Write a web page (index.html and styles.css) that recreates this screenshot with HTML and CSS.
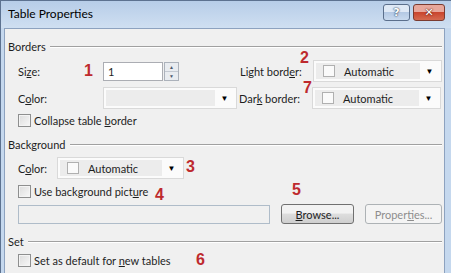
FILE: index.html
```html
<!doctype html>
<html lang="en">
<head>
    <meta charset="UTF-8">
    <title>Table Properties</title>
    <link rel="stylesheet" href="styles.css">
</head>
<body>
<div class="window">
    <div class="titlebar">
        <span class="title">Table Properties</span>
        <span class="tb-btn help">?</span>
        <span class="tb-btn close">&#10005;</span>
    </div>
    <div class="client">
        <div class="group-head"><span>Borders</span><i></i></div>
        <div class="borders">
            <div class="row">
                <label class="lbl">Si<u>z</u>e:</label>
                <div class="spin">
                    <span class="field">1</span>
                    <span class="spin-btns"><b>&#9650;</b><b>&#9660;</b></span>
                </div>
                <label class="lbl rlbl">Light bord<u>e</u>r:</label>
                <div class="combo wide"><span class="pick"><s></s>Automatic</span><em>&#9660;</em></div>
            </div>
            <div class="row">
                <label class="lbl">C<u>o</u>lor:</label>
                <div class="combo mid"><span class="pick"></span><em>&#9660;</em></div>
                <label class="lbl rlbl2">Dar<u>k</u> border:</label>
                <div class="combo wide"><span class="pick"><s></s>Automatic</span><em>&#9660;</em></div>
            </div>
            <div class="check"><span class="box"></span><span>Collapse table <u>b</u>order</span></div>
        </div>

        <div class="group-head"><span>Background</span><i></i></div>
        <div class="bg">
            <div class="row">
                <label class="lbl short">C<u>o</u>lor:</label>
                <div class="combo small"><span class="pick"><s></s>Automatic</span><em>&#9660;</em></div>
            </div>
            <div class="check"><span class="box"></span><span>Use background pict<u>u</u>re</span></div>
            <div class="row pic">
                <span class="path"></span>
                <span class="btn"><span><u>B</u>rowse...</span></span>
                <span class="btn off"><span>Proper<u>t</u>ies...</span></span>
            </div>
        </div>

        <div class="group-head"><span>Set</span><i></i></div>
        <div class="check last"><span class="box"></span><span>Set as default for <u>n</u>ew tables</span></div>

        <span class="num n1">1</span>
        <span class="num n2">2</span>
        <span class="num n7">7</span>
        <span class="num n3">3</span>
        <span class="num n4">4</span>
        <span class="num n5">5</span>
        <span class="num n6">6</span>
    </div>
</div>
</body>
</html>
```

FILE: styles.css
```css
* {
    margin: 0;
    padding: 0;
    box-sizing: border-box;
}

body {
    margin: 0;
    background: #6b82a3;
    font-family: "Lato", "Liberation Sans", sans-serif;
    font-size: 11px;
    color: #1e1e1e;
    overflow: hidden;
}

u {
    text-decoration: underline;
}

.window {
    width: 451px;
    height: 273px;
    overflow: hidden;
    background: #c5d8ee;
    border-left: 1px solid #5d7290;
    border-top: 1px solid #5d7290;
    padding: 0 6px 0 3px;
    display: flex;
    flex-direction: column;
}

.titlebar {
    height: 27px;
    flex-shrink: 0;
    display: flex;
    align-items: flex-start;
    background: linear-gradient(#b7cde8, #cfdff1);
    margin: 0 -6px 0 -3px;
    padding: 3px 6px 0 7px;
}

.title {
    flex: 1;
    font-size: 12px;
    line-height: 20px;
    color: #000;
}

.tb-btn {
    height: 17px;
    display: flex;
    align-items: center;
    justify-content: center;
    border: 1px solid #5b6f8c;
    border-radius: 3px;
    color: #fff;
    font-family: "DejaVu Sans", sans-serif;
    font-weight: bold;
    text-shadow: 0 0 2px #233a5c, 0 0 1px #233a5c;
}

.help {
    width: 27px;
    margin-right: 3px;
    background: linear-gradient(#dfe9f6 45%, #b4c9e4 50%, #c9daef);
    font-size: 11px;
}

.close {
    width: 32px;
    background: linear-gradient(#e8a79b 45%, #c9452e 50%, #d56a4f);
    border-color: #7a3b30;
    font-size: 11px;
    text-shadow: 0 0 2px #5a1a10, 0 0 1px #5a1a10;
}

.client {
    flex: 1;
    flex-shrink: 0;
    position: relative;
    background: #f0f0f0;
    border: 1px solid #8da2bf;
    border-bottom: 0;
    padding: 10px 2px 0 3px;
}

.group-head {
    display: flex;
    align-items: center;
    height: 15px;
}

.group-head span {
    padding-right: 4px;
}

.group-head i {
    flex: 1;
    height: 2px;
    border-top: 1px solid #a0a0a0;
    border-bottom: 1px solid #fff;
}

.borders {
    padding: 6px 0 10px 10px;
}

.row {
    display: flex;
    align-items: center;
    height: 22px;
    margin-bottom: 5px;
}

.lbl {
    width: 85px;
    flex-shrink: 0;
}

.short {
    width: 39px;
}

.rlbl, .rlbl2 {
    width: 73px;
}

.rlbl {
    margin-left: 61px;
}

.rlbl2 {
    margin-left: 2px;
}

.spin {
    display: flex;
    height: 19px;
}

.field {
    width: 60px;
    border: 1px solid #abadb3;
    background: #fff;
    padding-left: 4px;
    line-height: 17px;
}

.spin-btns {
    width: 15px;
    margin-left: 1px;
    display: flex;
    flex-direction: column;
    border: 1px solid #acb2bb;
    background: #e9ecf0;
}

.spin-btns b {
    flex: 1;
    font-size: 5px;
    line-height: 8px;
    text-align: center;
    color: #4d5a6c;
}

.spin-btns b + b {
    border-top: 1px solid #c4c9d1;
}

.combo {
    display: flex;
    align-items: center;
    height: 22px;
    flex-shrink: 0;
    border: 1px solid #d9d9d9;
    background: #fbfbfb;
    padding: 2px;
}

.combo .pick {
    flex: 1;
    align-self: stretch;
    display: flex;
    align-items: center;
    background: #ececec;
    padding-left: 7px;
}

.combo em {
    width: 19px;
    font-style: normal;
    font-size: 8px;
    text-align: center;
    color: #000;
}

.pick s {
    width: 12px;
    height: 12px;
    border: 1px solid #b0b0b0;
    background: #fafafa;
    margin-right: 9px;
}

.mid {
    width: 134px;
}

.wide {
    width: 129px;
}

.small {
    width: 127px;
}

.check {
    display: flex;
    align-items: center;
    height: 13px;
}

.box {
    width: 13px;
    height: 13px;
    border: 1px solid #8e8f8f;
    background: linear-gradient(135deg, #dcdcdc, #f8f8f8);
    box-shadow: inset 0 0 0 1px #f4f4f4;
    margin-right: 3px;
}

.bg {
    padding: 5px 0 10px 10px;
}

.bg .row {
    margin-bottom: 6px;
}

.bg .pic {
    margin: 6px 0 0;
    height: 20px;
}

.path {
    width: 252px;
    height: 19px;
    flex-shrink: 0;
    border: 1px solid #afbcc9;
    background: #f0f0f0;
    margin-right: 11px;
}

.btn {
    height: 20px;
    width: 73px;
    flex-shrink: 0;
    display: flex;
    align-items: center;
    justify-content: center;
    border: 1px solid #707070;
    border-radius: 3px;
    background: linear-gradient(#f2f2f2 45%, #dddddd 50%, #cfcfcf);
    margin-right: 11px;
}

.btn.off {
    width: 77px;
    margin-right: 0;
    border-color: #adb2b5;
    background: #f4f4f4;
    color: #8d8d8d;
}

.last {
    margin: 5px 0 0 10px;
}

.num {
    position: absolute;
    font-family: "Liberation Sans", sans-serif;
    font-weight: bold;
    font-size: 16px;
    color: #be2a2e;
    line-height: 16px;
}

.n1 { left: 79px; top: 34px; }
.n2 { left: 295px; top: 21px; }
.n7 { left: 298px; top: 51px; }
.n3 { left: 181px; top: 130px; }
.n4 { left: 150px; top: 158px; }
.n5 { left: 287px; top: 153px; }
.n6 { left: 191px; top: 223px; }
```
